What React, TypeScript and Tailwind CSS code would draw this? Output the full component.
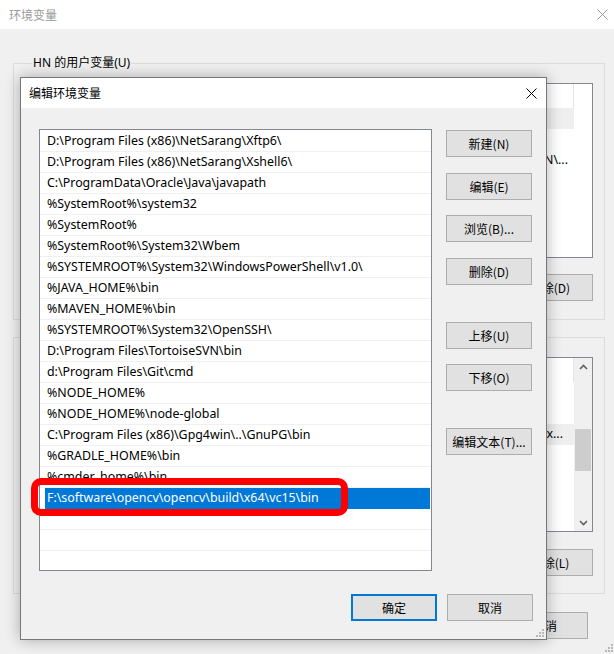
import React from "react";

const paths = [
  "D:\\Program Files (x86)\\NetSarang\\Xftp6\\",
  "D:\\Program Files (x86)\\NetSarang\\Xshell6\\",
  "C:\\ProgramData\\Oracle\\Java\\javapath",
  "%SystemRoot%\\system32",
  "%SystemRoot%",
  "%SystemRoot%\\System32\\Wbem",
  "%SYSTEMROOT%\\System32\\WindowsPowerShell\\v1.0\\",
  "%JAVA_HOME%\\bin",
  "%MAVEN_HOME%\\bin",
  "%SYSTEMROOT%\\System32\\OpenSSH\\",
  "D:\\Program Files\\TortoiseSVN\\bin",
  "d:\\Program Files\\Git\\cmd",
  "%NODE_HOME%",
  "%NODE_HOME%\\node-global",
  "C:\\Program Files (x86)\\Gpg4win\\..\\GnuPG\\bin",
  "%GRADLE_HOME%\\bin",
  "%cmder_home%\\bin",
];
const selected = "F:\\software\\opencv\\opencv\\build\\x64\\vc15\\bin";

function CloseX({ color }: { color: string }) {
  return (
    <svg width="11" height="11" viewBox="0 0 11 11">
      <path d="M0.5 0.5 L10.5 10.5 M10.5 0.5 L0.5 10.5" stroke={color} strokeWidth="1" fill="none" />
    </svg>
  );
}

function Grip() {
  return (
    <svg width="9" height="9" viewBox="0 0 9 9">
      <g fill="#b8b8b8">
        <rect x="6" y="0" width="2" height="2" />
        <rect x="3" y="3" width="2" height="2" />
        <rect x="6" y="3" width="2" height="2" />
        <rect x="0" y="6" width="2" height="2" />
        <rect x="3" y="6" width="2" height="2" />
        <rect x="6" y="6" width="2" height="2" />
      </g>
    </svg>
  );
}

function Chevron({ up }: { up: boolean }) {
  return (
    <svg width="9" height="6" viewBox="0 0 9 6">
      <polyline
        points={up ? "1,5 4.5,1.5 8,5" : "1,1 4.5,4.5 8,1"}
        stroke="#606060"
        strokeWidth="1.6"
        fill="none"
      />
    </svg>
  );
}

function Btn({ label, className = "" }: { label: string; className?: string }) {
  return (
    <div
      className={`flex h-[27px] w-[86px] shrink-0 items-center justify-center border border-[#adadad] bg-[#e1e1e1] text-[12px] text-black ${className}`}
    >
      {label}
    </div>
  );
}

function BgRow({ text, hl, pr }: { text?: string; hl?: boolean; pr: string }) {
  return (
    <div
      className={`flex h-[21px] w-[548px] shrink-0 items-center justify-end overflow-hidden whitespace-nowrap font-['Noto_Sans','Noto_Sans_CJK_SC',sans-serif] text-[12.4px] text-black ${pr} ${hl ? "bg-[#efefef]" : ""}`}
    >
      {text ? <span className="shrink-0">{text}</span> : null}
    </div>
  );
}

export default function App() {
  return (
    <div className="relative h-[654px] w-[614px] overflow-hidden bg-[#f0f0f0] font-['Noto_Sans_CJK_SC','Noto_Sans',sans-serif] text-[12px] text-black">
      {/* Background window: 环境变量 */}
      <div className="flex h-[29px] items-center justify-between bg-white pl-[9px] pr-[6px]">
        <span className="text-[12px] text-[#9a9a9a]">环境变量</span>
        <CloseX color="#9a9a9a" />
      </div>
      <div className="flex flex-col pl-[13px] pt-[26px]">
        <fieldset className="flex h-[265px] w-[592px] flex-col border border-[#dcdcdc] px-[11px]">
          <legend className="ml-[7px] px-[1px] font-['Noto_Sans','Noto_Sans_CJK_SC',sans-serif] leading-[16px]">
            HN 的用户变量(U)
          </legend>
          <div className="mt-[12px] flex h-[175px] w-[568px] flex-col border border-[#828790] bg-white">
            <div className="flex h-[24px] w-[548px] shrink-0">
              <div className="w-[150px] pl-[6px] leading-[24px]">变量</div>
              <div className="w-[398px] border-r border-[#e5e5e5] pl-[6px] leading-[24px]">值</div>
            </div>
            <BgRow hl text="C:\Program Files\JetBrains\IntelliJ IDEA" pr="pr-[200px]" />
            <BgRow text="C:\Users\HN\OneDrive" pr="pr-[300px]" />
            <BgRow text="%USERPROFILE%\AppData\Local\Microsoft\WindowsApps;C:\Users\HN\..." pr="pr-[6px]" />
            <BgRow text="%USERPROFILE%\AppData\Local\Temp" pr="pr-[260px]" />
            <BgRow text="%USERPROFILE%\AppData\Local\Temp" pr="pr-[260px]" />
          </div>
          <div className="mt-[16px] flex justify-end gap-[10px]">
            <Btn label="新建(N)..." />
            <Btn label="编辑(E)..." />
            <Btn label="删除(D)" />
          </div>
        </fieldset>

        <fieldset className="mt-[9px] flex h-[265px] w-[592px] flex-col border border-[#dcdcdc] px-[11px]">
          <legend className="ml-[7px] px-[1px] leading-[16px]">系统变量(S)</legend>
          <div className="mt-[12px] flex h-[175px] w-[568px] border border-[#828790] bg-white">
            <div className="flex w-[548px] flex-col">
              <div className="flex h-[24px] w-[548px] shrink-0">
                <div className="w-[150px] pl-[6px] leading-[24px]">变量</div>
                <div className="w-[398px] border-r border-[#e5e5e5] pl-[6px] leading-[24px]">值</div>
              </div>
              <BgRow text="C:\WINDOWS\system32\cmd.exe" pr="pr-[260px]" />
              <BgRow text="2" pr="pr-[380px]" />
              <BgRow hl text="C:\Program Files (x86)\Common Files\Oracle\Java\javapath;D:\Program Files (x..." pr="pr-[11px]" />
              <BgRow text=".COM;.EXE;.BAT;.CMD;.VBS;.VBE;.JS" pr="pr-[240px]" />
              <BgRow text="AMD64" pr="pr-[360px]" />
              <BgRow text="Intel64 Family 6 Model 158" pr="pr-[280px]" />
            </div>
            <div className="flex w-[18px] flex-col bg-[#f0f0f0]">
              <div className="flex h-[17px] shrink-0 items-center justify-center">
                <Chevron up />
              </div>
              <div className="mx-[1px] mt-[54px] h-[42px] bg-[#cdcdcd]" />
              <div className="flex-1" />
              <div className="flex h-[17px] shrink-0 items-center justify-center">
                <Chevron up={false} />
              </div>
            </div>
          </div>
          <div className="mt-[17px] flex justify-end gap-[10px]">
            <Btn label="新建(W)..." />
            <Btn label="编辑(I)..." />
            <Btn label="删除(L)" />
          </div>
        </fieldset>

        <div className="mt-[18px] flex w-[592px] justify-end gap-[10px] pr-[17px]">
          <Btn label="确定" />
          <Btn label="取消" />
        </div>
      </div>
      <div className="absolute bottom-[1px] right-[0px]">
        <Grip />
      </div>

      {/* Foreground dialog: 编辑环境变量 */}
      <div className="absolute left-[20px] top-[77px] flex h-[563px] w-[527px] flex-col border border-[#777777] bg-[#f0f0f0] shadow-[0_0_14px_rgba(0,0,0,0.3)]">
        <div className="flex h-[30px] shrink-0 items-center justify-between bg-white pl-[8px] pr-[9px]">
          <span className="text-[12px] text-black">编辑环境变量</span>
          <CloseX color="#000000" />
        </div>
        <div className="flex flex-col pl-[18px] pt-[21px]">
          <div className="flex">
            <div className="flex h-[442px] w-[393px] flex-col overflow-hidden border border-[#828790] bg-white pt-[1px] font-['Noto_Sans','Noto_Sans_CJK_SC',sans-serif] text-[12.4px]">
              {paths.map((p, i) => (
                <div
                  key={i}
                  className="flex h-[21px] shrink-0 items-center whitespace-nowrap border-b border-[#f0f0f0] pl-[7px] text-black"
                >
                  {p}
                </div>
              ))}
              <div className="flex h-[21px] shrink-0 items-center pl-[5px] pr-[1px]">
                <div className="flex h-[21px] w-full items-center whitespace-nowrap bg-[#0078d7] pl-[2px] text-white">
                  {selected}
                </div>
              </div>
              <div className="h-[21px] shrink-0 border-b border-[#f0f0f0]" />
              <div className="h-[21px] shrink-0 border-b border-[#f0f0f0]" />
              <div className="h-[21px] shrink-0 border-b border-[#f0f0f0]" />
            </div>
            <div className="ml-[14px] flex flex-col">
              <Btn label="新建(N)" className="mt-[1px]" />
              <Btn label="编辑(E)" className="mt-[16px]" />
              <Btn label="浏览(B)..." className="mt-[15px]" />
              <Btn label="删除(D)" className="mt-[16px]" />
              <Btn label="上移(U)" className="mt-[37px]" />
              <Btn label="下移(O)" className="mt-[15px]" />
              <Btn label="编辑文本(T)..." className="mt-[37px]" />
            </div>
          </div>
          <div className="mt-[23px] flex justify-end gap-[10px] pr-[13px]">
            <div className="flex h-[27px] w-[86px] items-center justify-center border-2 border-[#0078d7] bg-[#e1e1e1] text-[12px] text-black">
              确定
            </div>
            <Btn label="取消" />
          </div>
        </div>
        <div className="absolute bottom-[1px] right-[1px]">
          <Grip />
        </div>
      </div>

      {/* Red annotation box */}
      <div className="absolute left-[31px] top-[478px] h-[38px] w-[317px] rounded-[10px] border-[7px] border-[#ff0000]" />
    </div>
  );
}
